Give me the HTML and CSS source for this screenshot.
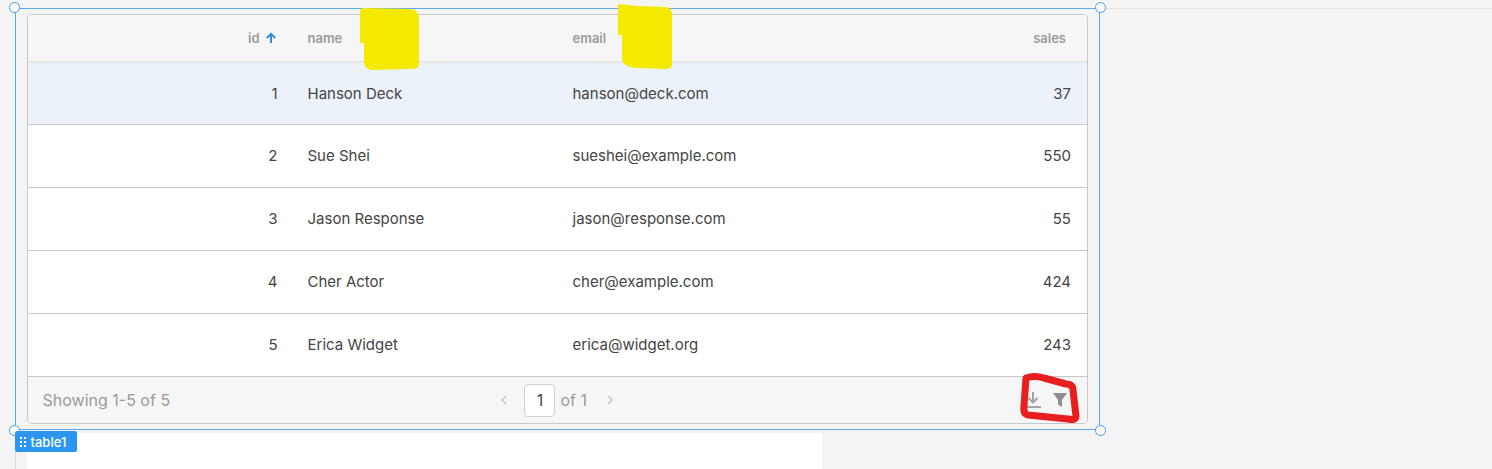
FILE: index.html
```html
<!DOCTYPE html>
<html lang="en">
<head>
<meta charset="utf-8">
<title>table1</title>
<link rel="stylesheet" href="styles.css">
</head>
<body>
<div class="canvas">
  <div class="top-rule"></div>
  <div class="left-rule"></div>
  <section class="frame">
    <span class="handle h-tl"></span><span class="handle h-tr"></span><span class="handle h-bl"></span><span class="handle h-br"></span>
    <div class="table">
      <div class="row head">
        <div class="cell c-id"><span>id</span><svg class="sort" width="12" height="12" viewBox="0 0 12 12"><path d="M6 11V2M1.8 6 6 1.8 10.200 6" fill="none" stroke="#2d8ce0" stroke-width="2"/></svg></div>
        <div class="cell c-name">name</div>
        <div class="cell c-email">email</div>
        <div class="cell c-sales">sales</div>
      </div>
      <div class="row body selected">
        <div class="cell c-id">1</div><div class="cell c-name">Hanson Deck</div><div class="cell c-email">hanson@deck.com</div><div class="cell c-sales">37</div>
      </div>
      <div class="row body">
        <div class="cell c-id">2</div><div class="cell c-name">Sue Shei</div><div class="cell c-email">sueshei@example.com</div><div class="cell c-sales">550</div>
      </div>
      <div class="row body">
        <div class="cell c-id">3</div><div class="cell c-name">Jason Response</div><div class="cell c-email">jason@response.com</div><div class="cell c-sales">55</div>
      </div>
      <div class="row body">
        <div class="cell c-id">4</div><div class="cell c-name">Cher Actor</div><div class="cell c-email">cher@example.com</div><div class="cell c-sales">424</div>
      </div>
      <div class="row body">
        <div class="cell c-id">5</div><div class="cell c-name">Erica Widget</div><div class="cell c-email">erica@widget.org</div><div class="cell c-sales">243</div>
      </div>
      <div class="footer">
        <div class="count">Showing 1-5 of 5</div>
        <div class="pager">
          <svg width="8" height="10" viewBox="0 0 8 10"><path d="M6 1 2 5l4 4" fill="none" stroke="#c4c4c4" stroke-width="1.500"/></svg>
          <span class="page-box">1</span>
          <span class="of">of 1</span>
          <svg width="8" height="10" viewBox="0 0 8 10"><path d="m2 1 4 4-4 4" fill="none" stroke="#c4c4c4" stroke-width="1.500"/></svg>
        </div>
        <div class="tools">
          <svg width="18" height="18" viewBox="0 0 18 18"><path d="M9 1v10M4.500 7 9 11.500 13.500 7" fill="none" stroke="#a3a3a3" stroke-width="2"/><path d="M1 16h16" stroke="#a3a3a3" stroke-width="2"/></svg>
          <svg width="16" height="16" viewBox="0 0 16 16"><path d="M1 1h14L10 8v7l-4-2.500V8z" fill="#8f8f8f"/></svg>
        </div>
      </div>
    </div>
    <div class="tag"><svg width="8" height="10" viewBox="0 0 8 10"><g fill="#fff"><rect x="0" y="0" width="2" height="2"/><rect x="4" y="0" width="2" height="2"/><rect x="0" y="4" width="2" height="2"/><rect x="4" y="4" width="2" height="2"/><rect x="0" y="8" width="2" height="2"/><rect x="4" y="8" width="2" height="2"/></g></svg>table1</div>
  </section>
  <div class="sheet"></div>
  <svg class="mark m-y1" width="62" height="64" viewBox="0 0 62 64"><path d="M1 5Q1 1 5 1L50 2Q60 2 60 12L60 58Q60 62 50 62L14 63Q6 63 5 56L5 36H1Z" fill="#f6e900"/></svg>
  <svg class="mark m-y2" width="56" height="68" viewBox="0 0 56 68"><path d="M1 1L20 3 48 4Q55 4 55 12L55 62Q55 66 48 66L20 65Q6 64 5 56L5 32H1Z" fill="#f6e900"/></svg>
  <svg class="mark m-red" width="62" height="54" viewBox="0 0 62 54"><path d="M8 6Q16 3 26 6L48 12Q55 12 55 18L58 44Q58 49 50 47L10 43Q5 42 6 34Z" fill="none" stroke="#e81f1f" stroke-width="7" stroke-linejoin="round"/></svg>
</div>
</body>
</html>
```
FILE: styles.css
```css
* { box-sizing: border-box; }
html, body { margin: 0; height: 100%; overflow: hidden; }
body { background: #f4f4f4; font-family: Inter, "Liberation Sans", sans-serif; color: #444; }
.canvas { position: relative; width: 1492px; height: 469px; padding: 8px 0 0 15px; }
.top-rule { position: absolute; left: 1100px; right: 0; top: 8px; height: 1px; background: #e2e2e2; }
.left-rule { position: absolute; left: 15px; top: 430px; bottom: 0; width: 1px; background: #dcdcdc; }
.frame { position: relative; width: 1085px; height: 422px; border: 1.500px solid #5aaaf0; padding: 4.500px 11px 0 10.500px; }
.handle { position: absolute; width: 11px; height: 11px; border-radius: 50%; background: #fff; border: 1.500px solid #3c9cf0; z-index: 2; }
.h-tl { left: -7px; top: -7px; }
.h-tr { right: -7px; top: -7px; }
.h-bl { left: -7px; bottom: -7px; }
.h-br { right: -7px; bottom: -7px; }
.table { background: #fff; border: 1px solid #c8c8c8; border-radius: 5px; height: 410px; overflow: hidden; }
.row { display: grid; grid-template-columns: 265px 265px 1fr 100px; font-size: 15px; align-items: center; }
.cell { padding: 0; }
.c-id { display: flex; justify-content: flex-end; align-items: center; gap: 5px; padding-right: 15px; }
.c-name { padding-left: 15px; }
.c-email { padding-left: 15px; }
.c-sales { text-align: right; padding-right: 16px; }
.head { height: 48px; background: #f6f6f6; border-bottom: 2px solid #e6e6e8; font-size: 13px; font-weight: 600; color: #9b9b9b; }
.head .c-id { padding-right: 16px; }
.head .c-sales { padding-right: 21px; }
.sort { display: block; }
.body { height: 63px; border-bottom: 1px solid #c8c8c8; background: #fff; }
.selected { height: 62px; background: #ebf2fa; border-bottom-color: #c3ccd8; }
.footer { display: grid; grid-template-columns: 1fr auto 1fr; align-items: center; height: 47px; background: #f6f6f6; padding: 0 15px; font-size: 16px; color: #9a9a9a; }
.pager { display: flex; align-items: center; }
.page-box { width: 31px; height: 33px; margin: 0 5px 0 16px; background: #fff; border: 1px solid #d0d0d0; border-radius: 4px; color: #444; display: flex; align-items: center; justify-content: center; }
.of { margin-right: 19px; }
.tools { display: flex; justify-content: flex-end; align-items: center; gap: 10px; padding-right: 4px; }
.tag { position: absolute; left: -1.500px; top: 422px; display: flex; align-items: center; gap: 3px; width: 62px; height: 21px; padding-left: 5px; background: #2a96f0; border-radius: 2px; color: #fff; font-size: 13px; font-weight: 500; z-index: 3; }
.sheet { position: absolute; left: 27px; top: 433px; width: 795px; bottom: 0; background: #fff; }
.mark { position: absolute; z-index: 4; }
.m-y1 { left: 359px; top: 7px; }
.m-y2 { left: 617px; top: 3px; }
.m-red { left: 1018px; top: 372px; }
```
